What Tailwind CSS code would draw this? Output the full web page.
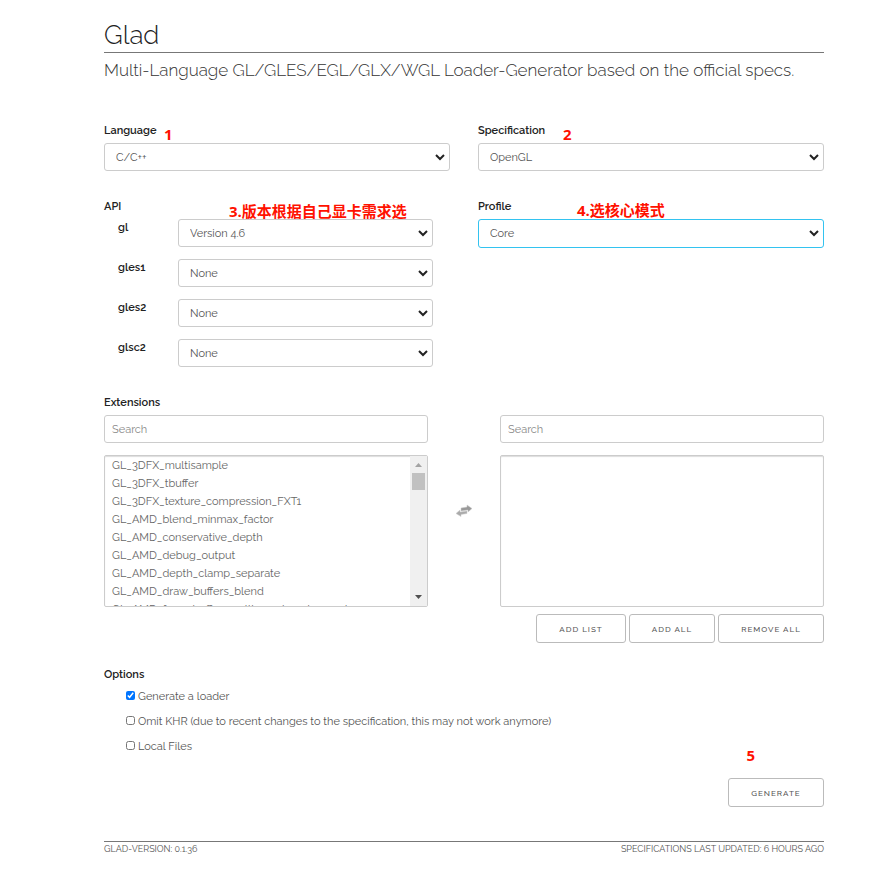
<!DOCTYPE html>
<html lang="en">

<head>
    <meta charset="UTF-8">
    <meta name="viewport" content="width=device-width, initial-scale=1.0">
    <title>Glad</title>
    <script src="https://cdn.jsdelivr.net/npm/@tailwindcss/browser@4"></script>
</head>

<body class="bg-white font-[Raleway,Lato,sans-serif] text-[11px] leading-4 text-[#555]">
    <div class="pl-[104px] pr-[65px] pt-4">
        <header>
            <h1 class="box-content h-9 border-b border-[#777] text-[26px] leading-[38px] font-light text-[#222]">Glad</h1>
            <h2 class="pt-[3px] text-[17px] leading-[28px] font-light text-[#333]">Multi-Language GL/GLES/EGL/GLX/WGL Loader-Generator based on the official specs.</h2>
        </header>

        <form class="pt-[38px]">
            <div class="grid grid-cols-2 gap-x-7">
                <div class="relative">
                    <label for="language" class="block h-[21px] pt-px font-semibold text-[#222]">Language</label>
                    <div class="relative">
                        <select id="language" class="block h-7 w-full appearance-none rounded-[3px] border border-[#ccc] bg-white px-[11px] pt-px outline-none">
                            <option>C/C++</option>
                        </select>
                        <svg class="pointer-events-none absolute top-[10px] right-[5px]" width="10" height="8" viewBox="0 0 10 8" fill="none" stroke="#222" stroke-width="2"><path d="M1 2l4 4 4-4" /></svg>
                    </div>
                    <span class="absolute top-1 left-[60px] font-['Open_Sans','Noto_Sans_CJK_SC',sans-serif] text-[15px] font-bold text-[#f10]">1</span>
                </div>
                <div class="relative">
                    <label for="specification" class="block h-[21px] pt-px font-semibold text-[#222]">Specification</label>
                    <div class="relative">
                        <select id="specification" class="block h-7 w-full appearance-none rounded-[3px] border border-[#ccc] bg-white px-[11px] pt-px outline-none">
                            <option>OpenGL</option>
                        </select>
                        <svg class="pointer-events-none absolute top-[10px] right-[5px]" width="10" height="8" viewBox="0 0 10 8" fill="none" stroke="#222" stroke-width="2"><path d="M1 2l4 4 4-4" /></svg>
                    </div>
                    <span class="absolute top-1 left-[85px] font-['Open_Sans','Noto_Sans_CJK_SC',sans-serif] text-[15px] font-bold text-[#f10]">2</span>
                </div>
            </div>

            <div class="grid grid-cols-2 gap-x-7 pt-[27px]">
                <div class="relative">
                    <p class="h-[21px] pt-px font-semibold text-[#222]">API</p>
                    <div class="grid grid-cols-[60px_1fr] gap-y-3 pr-[17px] pl-[14px]">
                        <label for="gl" class="pt-px font-semibold text-[#222]">gl</label>
                        <div class="relative">
                            <select id="gl" class="block h-7 w-full appearance-none rounded-[3px] border border-[#ccc] bg-white px-[11px] pt-px outline-none">
                                <option>Version 4.6</option>
                            </select>
                            <svg class="pointer-events-none absolute top-[10px] right-[5px]" width="10" height="8" viewBox="0 0 10 8" fill="none" stroke="#222" stroke-width="2"><path d="M1 2l4 4 4-4" /></svg>
                        </div>
                        <label for="gles1" class="pt-px font-semibold text-[#222]">gles1</label>
                        <div class="relative">
                            <select id="gles1" class="block h-7 w-full appearance-none rounded-[3px] border border-[#ccc] bg-white px-[11px] pt-px outline-none">
                                <option>None</option>
                            </select>
                            <svg class="pointer-events-none absolute top-[10px] right-[5px]" width="10" height="8" viewBox="0 0 10 8" fill="none" stroke="#222" stroke-width="2"><path d="M1 2l4 4 4-4" /></svg>
                        </div>
                        <label for="gles2" class="pt-px font-semibold text-[#222]">gles2</label>
                        <div class="relative">
                            <select id="gles2" class="block h-7 w-full appearance-none rounded-[3px] border border-[#ccc] bg-white px-[11px] pt-px outline-none">
                                <option>None</option>
                            </select>
                            <svg class="pointer-events-none absolute top-[10px] right-[5px]" width="10" height="8" viewBox="0 0 10 8" fill="none" stroke="#222" stroke-width="2"><path d="M1 2l4 4 4-4" /></svg>
                        </div>
                        <label for="glsc2" class="pt-px font-semibold text-[#222]">glsc2</label>
                        <div class="relative">
                            <select id="glsc2" class="block h-7 w-full appearance-none rounded-[3px] border border-[#ccc] bg-white px-[11px] pt-px outline-none">
                                <option>None</option>
                            </select>
                            <svg class="pointer-events-none absolute top-[10px] right-[5px]" width="10" height="8" viewBox="0 0 10 8" fill="none" stroke="#222" stroke-width="2"><path d="M1 2l4 4 4-4" /></svg>
                        </div>
                    </div>
                    <span class="absolute top-[5px] left-[125px] font-['Open_Sans','Noto_Sans_CJK_SC',sans-serif] text-[15px] font-bold whitespace-nowrap text-[#f10]" lang="zh-CN">3.版本根据自己显卡需求选</span>
                </div>
                <div class="relative">
                    <label for="profile" class="block h-[21px] pt-px font-semibold text-[#222]">Profile</label>
                    <div class="relative">
                        <select id="profile" class="block h-[29px] w-full appearance-none rounded-[3px] border border-[#33c3f0] bg-white px-[11px] outline-none">
                            <option>Core</option>
                        </select>
                        <svg class="pointer-events-none absolute top-[10px] right-[5px]" width="10" height="8" viewBox="0 0 10 8" fill="none" stroke="#222" stroke-width="2"><path d="M1 2l4 4 4-4" /></svg>
                    </div>
                    <span class="absolute top-1 left-[99px] font-['Open_Sans','Noto_Sans_CJK_SC',sans-serif] text-[15px] font-bold whitespace-nowrap text-[#f10]" lang="zh-CN">4.选核心模式</span>
                </div>
            </div>

            <section class="pt-[27px]">
                <h3 class="h-[21px] pt-px font-semibold text-[#222]">Extensions</h3>
                <div class="grid grid-cols-[1fr_72px_1fr]">
                    <div>
                        <input type="text" placeholder="Search" aria-label="Search available extensions" class="block h-7 w-full rounded-[3px] border border-[#ccc] px-[7px] outline-none placeholder:text-[#888]">
                        <div class="relative mt-3">
                            <select multiple aria-label="Available extensions" class="block h-[152px] w-full appearance-none overflow-hidden rounded-[2px] border border-[#ccc] bg-white px-0 pt-[3px] pb-0 text-[#666] shadow-[inset_0_1px_1px_#ddd] outline-none">
                                <option class="h-[18px] px-[7px] py-0 leading-[18px]">GL_3DFX_multisample</option>
                                <option class="h-[18px] px-[7px] py-0 leading-[18px]">GL_3DFX_tbuffer</option>
                                <option class="h-[18px] px-[7px] py-0 leading-[18px]">GL_3DFX_texture_compression_FXT1</option>
                                <option class="h-[18px] px-[7px] py-0 leading-[18px]">GL_AMD_blend_minmax_factor</option>
                                <option class="h-[18px] px-[7px] py-0 leading-[18px]">GL_AMD_conservative_depth</option>
                                <option class="h-[18px] px-[7px] py-0 leading-[18px]">GL_AMD_debug_output</option>
                                <option class="h-[18px] px-[7px] py-0 leading-[18px]">GL_AMD_depth_clamp_separate</option>
                                <option class="h-[18px] px-[7px] py-0 leading-[18px]">GL_AMD_draw_buffers_blend</option>
                                <option class="h-[18px] px-[7px] py-0 leading-[18px]">GL_AMD_framebuffer_multisample_advanced</option>
                            </select>
                            <!-- scrollbar -->
                            <div class="pointer-events-none absolute inset-y-px right-px flex w-[17px] flex-col items-center justify-between bg-[#f0f0f0]">
                                <div class="flex flex-col items-center">
                                    <svg width="17" height="17" viewBox="0 0 17 17" fill="#a3a3a3"><path d="M5 11l3.500-4 3.500 4z" /></svg>
                                    <div class="h-[17px] w-[13px] bg-[#c1c1c1]"></div>
                                </div>
                                <svg width="17" height="17" viewBox="0 0 17 17" fill="#505050"><path d="M5 6l3.500 4 3.500-4z" /></svg>
                            </div>
                        </div>
                    </div>
                    <div class="flex justify-center pt-[89px]">
                        <svg width="16" height="14" viewBox="0 0 16 14">
                            <path d="M5 4l6-1V1l5 3.500-4 3.500V6L5 7z" fill="#999" stroke="#ccc" stroke-width="0.500" />
                            <path d="M11 9.500l-6 1v2L0 9.500 4 6v2l7-1z" fill="#aaa" stroke="#ccc" stroke-width="0.500" />
                        </svg>
                    </div>
                    <div>
                        <input type="text" placeholder="Search" aria-label="Search selected extensions" class="block h-7 w-full rounded-[3px] border border-[#ccc] px-[7px] outline-none placeholder:text-[#888]">
                        <select multiple aria-label="Selected extensions" class="mt-3 block h-[152px] w-full appearance-none overflow-hidden rounded-[2px] border border-[#ccc] bg-white p-0 shadow-[inset_0_1px_1px_#ddd] outline-none"></select>
                    </div>
                </div>
                <div class="flex justify-end gap-[3px] pt-[7px] text-[8px] font-medium tracking-[1px]">
                    <button type="button" class="h-[29px] w-[90px] rounded-[3px] border border-[#bbb]">ADD LIST</button>
                    <button type="button" class="h-[29px] w-[86px] rounded-[3px] border border-[#bbb]">ADD ALL</button>
                    <button type="button" class="h-[29px] w-[106px] rounded-[3px] border border-[#bbb]">REMOVE ALL</button>
                </div>
            </section>

            <section class="pt-6">
                <h3 class="font-semibold text-[#222]">Options</h3>
                <div class="flex flex-col items-start gap-[9px] pt-[6px] pl-[22px]">
                    <label class="flex items-center gap-[3px]"><input type="checkbox" checked class="mb-[3px] size-[9px] accent-[#0075ff]">Generate a loader</label>
                    <label class="flex items-center gap-[3px]"><input type="checkbox" class="mb-[3px] size-[9px]">Omit KHR (due to recent changes to the specification, this may not work anymore)</label>
                    <label class="flex items-center gap-[3px]"><input type="checkbox" class="mb-[3px] size-[9px]">Local Files</label>
                </div>
            </section>

            <div class="relative flex justify-end pt-[23px]">
                <span class="absolute -top-2 right-[69px] font-['Open_Sans','Noto_Sans_CJK_SC',sans-serif] text-[15px] font-bold text-[#f10]">5</span>
                <button type="submit" class="h-[29px] w-24 rounded-[3px] border border-[#bbb] text-[8px] font-medium tracking-[1px]">GENERATE</button>
            </div>
        </form>

        <footer class="mt-[34px] flex justify-between border-t border-[#777] text-[9px] leading-[14px]">
            <span>GLAD-VERSION: 0.1.36</span>
            <span>SPECIFICATIONS LAST UPDATED: 6 HOURS AGO</span>
        </footer>
    </div>
</body>

</html>
